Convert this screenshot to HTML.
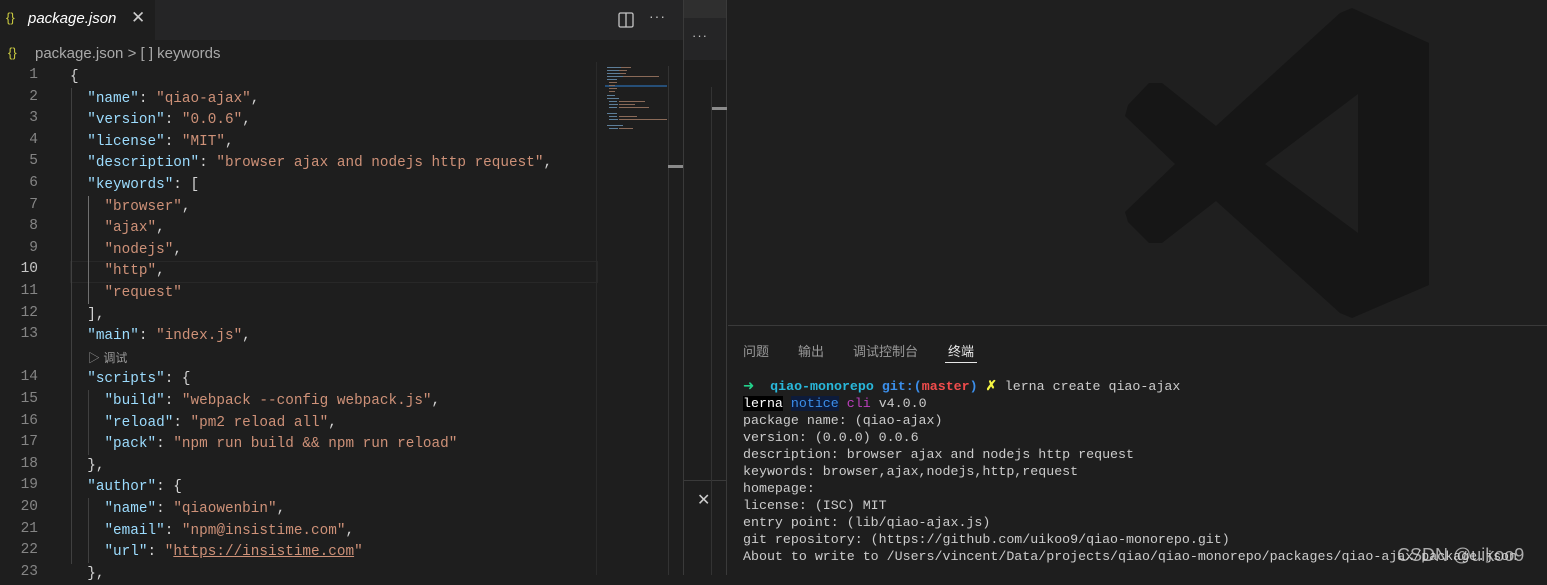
<!DOCTYPE html>
<html><head><meta charset="utf-8"><style>
*{margin:0;padding:0;box-sizing:border-box}
body{width:1547px;height:575px;overflow:hidden;background:#1e1e1e;position:relative;font-family:"Liberation Sans","Noto Sans CJK SC",sans-serif}
.a{position:absolute}
.code{font-family:"Liberation Mono",monospace;font-size:14.35px;white-space:pre;color:#d4d4d4}
.k{color:#9cdcfe}.s{color:#ce9178}
.ln{position:absolute;left:0;width:38px;text-align:right;color:#858585;font-family:"Liberation Mono",monospace;font-size:14.5px}
.term{font-family:"Liberation Mono",monospace;font-size:13.3px;white-space:pre;color:#cccccc;line-height:17px}
</style></head><body>
<div class="a" style="left:0;top:0;width:683px;height:40px;background:#252526"></div>
<div class="a" style="left:0;top:0;width:155px;height:40px;background:#1e1e1e"></div>
<div class="a" style="left:6px;top:10px;color:#cbcb41;font-size:13px">{}</div>
<div class="a" style="left:28px;top:10px;color:#fff;font-size:15px;font-style:italic">package.json</div>
<div class="a" style="left:131px;top:8px;color:#ccc;font-size:17px">✕</div>
<svg class="a" style="left:618px;top:12px" width="16" height="16"><rect x="1" y="1" width="14" height="14" rx="1.5" fill="none" stroke="#c5c5c5" stroke-width="1.3"/><line x1="8" y1="1" x2="8" y2="15" stroke="#c5c5c5" stroke-width="1.3"/></svg>
<div class="a" style="left:649px;top:8px;color:#c5c5c5;font-size:14px;letter-spacing:1px">···</div>
<div class="a" style="left:8px;top:45px;color:#cbcb41;font-size:13px">{}</div>
<div class="a" style="left:35px;top:45px;color:#a9a9a9;font-size:15px">package.json &gt; [ ] keywords</div>
<div class="a" style="left:70px;top:261px;width:528px;height:22px;border:1px solid #282828"></div>
<div class="a" style="left:71px;top:88px;width:1px;height:476px;background:#404040"></div>
<div class="a" style="left:88px;top:196px;width:1px;height:108px;background:#707070"></div>
<div class="a" style="left:88px;top:390px;width:1px;height:65px;background:#404040"></div>
<div class="a" style="left:88px;top:498px;width:1px;height:65px;background:#404040"></div>
<div id="code"></div>
<div class="a" style="left:88px;top:349px;color:#999;font-size:12px">▷ 调试</div>
<div class="a" style="left:596px;top:62px;width:1px;height:513px;background:#2a2a2a"></div>
<div class="a" style="left:668px;top:66px;width:1px;height:509px;background:#333"></div>
<div class="a" style="left:668px;top:165px;width:15px;height:3px;background:#8a8a8a"></div>
<div class="a" style="left:605px;top:85px;width:62px;height:2px;background:#264f78"></div>
<svg class="a" style="left:605px;top:67px" width="62" height="70">
<g fill="#5d7e99"><rect x="2" y="0" width="14" height="1"/><rect x="2" y="3" width="12" height="1"/><rect x="2" y="6" width="13" height="1"/><rect x="2" y="9" width="16" height="1"/><rect x="2" y="12" width="10" height="1"/><rect x="2" y="28" width="8" height="1"/><rect x="2" y="31" width="12" height="1"/><rect x="4" y="34" width="8" height="1"/><rect x="4" y="37" width="9" height="1"/><rect x="4" y="40" width="8" height="1"/><rect x="2" y="46" width="10" height="1"/><rect x="4" y="49" width="8" height="1"/><rect x="4" y="52" width="9" height="1"/><rect x="2" y="58" width="16" height="1"/><rect x="4" y="61" width="9" height="1"/></g>
<g fill="#8a6a58"><rect x="16" y="0" width="10" height="1"/><rect x="14" y="3" width="8" height="1"/><rect x="15" y="6" width="6" height="1"/><rect x="18" y="9" width="36" height="1"/><rect x="4" y="15" width="8" height="1"/><rect x="4" y="18" width="6" height="1"/><rect x="4" y="21" width="8" height="1"/><rect x="4" y="24" width="6" height="1"/><rect x="14" y="34" width="26" height="1"/><rect x="14" y="37" width="16" height="1"/><rect x="14" y="40" width="30" height="1"/><rect x="14" y="49" width="18" height="1"/><rect x="14" y="52" width="50" height="1"/><rect x="14" y="61" width="14" height="1"/></g></svg>
<div class="a" style="left:683px;top:0;width:44px;height:575px;background:#1e1e1e;border-left:1px solid #3a3a3a;border-right:1px solid #3a3a3a"></div>
<div class="a" style="left:684px;top:0;width:42px;height:18px;background:#2f2f2f"></div>
<div class="a" style="left:684px;top:18px;width:42px;height:42px;background:#252526"></div>
<div class="a" style="left:692px;top:28px;color:#c5c5c5;font-size:13px;letter-spacing:1px">···</div>
<div class="a" style="left:684px;top:480px;width:42px;height:1px;background:#3a3a3a"></div>
<div class="a" style="left:697px;top:490px;color:#ccc;font-size:16px">✕</div>
<div class="a" style="left:711px;top:87px;width:16px;height:488px;border-left:1px solid #333"></div>
<div class="a" style="left:712px;top:107px;width:15px;height:3px;background:#8a8a8a"></div>
<div class="a" style="left:728px;top:0;width:819px;height:325px;background:#1f1f1f"></div>
<svg class="a" style="left:0;top:0" width="1547" height="330"><path fill-rule="evenodd" fill="#161616" d="M1340 13 L1352 8 L1429 43 L1429 285 L1352 318 L1340 313 L1216 201 L1162 243 L1149 243 L1128 222 L1125 212 L1175 164 L1125 116 L1128 105 L1149 83 L1162 83 L1216 126 Z M1358 94 L1265 164 L1358 233 Z"/></svg>
<div class="a" style="left:728px;top:325px;width:819px;height:250px;background:#1e1e1e;border-top:1px solid #3a3a3a"></div>
<div class="a" style="left:743px;top:341px;color:#999;font-size:13px">问题</div>
<div class="a" style="left:798px;top:341px;color:#999;font-size:13px">输出</div>
<div class="a" style="left:853px;top:341px;color:#999;font-size:13px">调试控制台</div>
<div class="a" style="left:948px;top:341px;color:#e7e7e7;font-size:13px">终端</div>
<div class="a" style="left:945px;top:362px;width:32px;height:1px;background:#e7e7e7"></div>
<div class="a term" style="left:743px;top:378px"><span style="color:#23d18b">➜</span>  <b style="color:#29b8db">qiao-monorepo</b> <b style="color:#3b8eea">git:(</b><b style="color:#f14c4c">master</b><b style="color:#3b8eea">)</b> <b style="color:#f5f543">✗</b> lerna create qiao-ajax
<span style="background:#000;color:#fff">lerna</span> <span style="background:#0d1b3a;color:#3b8eea">notice</span> <span style="color:#bc3fbc">cli</span> v4.0.0
package name: (qiao-ajax)
version: (0.0.0) 0.0.6
description: browser ajax and nodejs http request
keywords: browser,ajax,nodejs,http,request
homepage:
license: (ISC) MIT
entry point: (lib/qiao-ajax.js)
git repository: (https://github.com/uikoo9/qiao-monorepo.git)
About to write to /Users/vincent/Data/projects/qiao/qiao-monorepo/packages/qiao-ajax/package.json</div>
<div class="a" style="left:1397px;top:545px;color:rgba(220,220,220,.75);font-size:18px">CSDN @uikoo9</div>
<script>
var L=[
[1,'{'],
[2,'  <span class=k>"name"</span>: <span class=s>"qiao-ajax"</span>,'],
[3,'  <span class=k>"version"</span>: <span class=s>"0.0.6"</span>,'],
[4,'  <span class=k>"license"</span>: <span class=s>"MIT"</span>,'],
[5,'  <span class=k>"description"</span>: <span class=s>"browser ajax and nodejs http request"</span>,'],
[6,'  <span class=k>"keywords"</span>: ['],
[7,'    <span class=s>"browser"</span>,'],
[8,'    <span class=s>"ajax"</span>,'],
[9,'    <span class=s>"nodejs"</span>,'],
[10,'    <span class=s>"http"</span>,'],
[11,'    <span class=s>"request"</span>'],
[12,'  ],'],
[13,'  <span class=k>"main"</span>: <span class=s>"index.js"</span>,'],
[14,'  <span class=k>"scripts"</span>: {'],
[15,'    <span class=k>"build"</span>: <span class=s>"webpack --config webpack.js"</span>,'],
[16,'    <span class=k>"reload"</span>: <span class=s>"pm2 reload all"</span>,'],
[17,'    <span class=k>"pack"</span>: <span class=s>"npm run build &amp;&amp; npm run reload"</span>'],
[18,'  },'],
[19,'  <span class=k>"author"</span>: {'],
[20,'    <span class=k>"name"</span>: <span class=s>"qiaowenbin"</span>,'],
[21,'    <span class=k>"email"</span>: <span class=s>"npm@insistime.com"</span>,'],
[22,'    <span class=k>"url"</span>: <span class=s>"<u>https://insistime.com</u>"</span>'],
[23,'  },']];
var h='';
L.forEach(function(l){var n=l[0];var c=77+(n-1)*21.6+(n>=14?21.6:0);var t=c-11;
h+='<div class="ln" style="top:'+(t+1)+'px;'+(n==10?'color:#c6c6c6':'')+'">'+n+'</div>';
h+='<div class="a code" style="left:70px;top:'+t+'px;line-height:22px">'+l[1]+'</div>';});
document.getElementById('code').innerHTML=h;
</script>
</body></html>
